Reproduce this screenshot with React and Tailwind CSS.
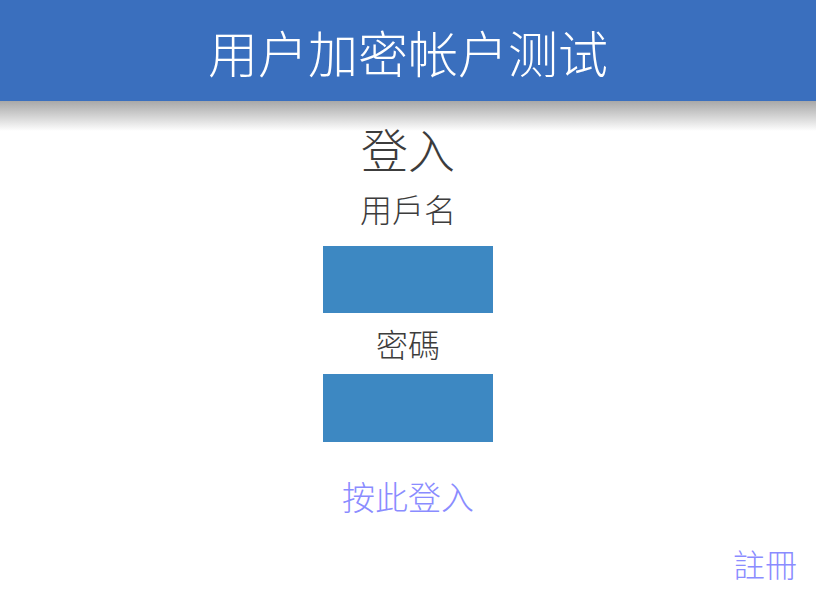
import React from "react";

const cjk = { fontFamily: '"Noto Sans CJK SC", "Noto Sans CJK TC", sans-serif' };

const App = () => {
  return (
    <div className="w-[816px] h-[612px] bg-white overflow-hidden flex flex-col" style={cjk}>
      <div className="h-[101px] bg-[#3a6fbe] flex items-center justify-center shrink-0">
        <h1 className="text-[50px] font-light text-white leading-none">用户加密帐户测试</h1>
      </div>
      <div className="h-[30px] -mb-[30px] bg-gradient-to-b from-[#a8a8a8] to-white shrink-0" />
      <div className="flex flex-col items-center pt-[23px]">
        <p className="text-[47px] font-light text-[#3c3c3c] leading-none">登入</p>
        <label className="mt-[21px] text-[32px] font-light text-[#3c3c3c] leading-none">用戶名</label>
        <input className="mt-[22px] w-[170px] h-[67px] bg-[#3d88c2] outline-none" />
        <label className="mt-[14px] text-[32px] font-light text-[#3c3c3c] leading-none">密碼</label>
        <input type="password" className="mt-[15px] w-[170px] h-[68px] bg-[#3d88c2] outline-none" />
        <button className="mt-[38px] text-[33px] font-light text-[#8a8cff] leading-none">按此登入</button>
      </div>
      <div className="flex justify-end pr-[19px] mt-[34px]">
        <a className="text-[32px] font-light text-[#8a8cff] leading-none">註冊</a>
      </div>
    </div>
  );
};

export default App;
